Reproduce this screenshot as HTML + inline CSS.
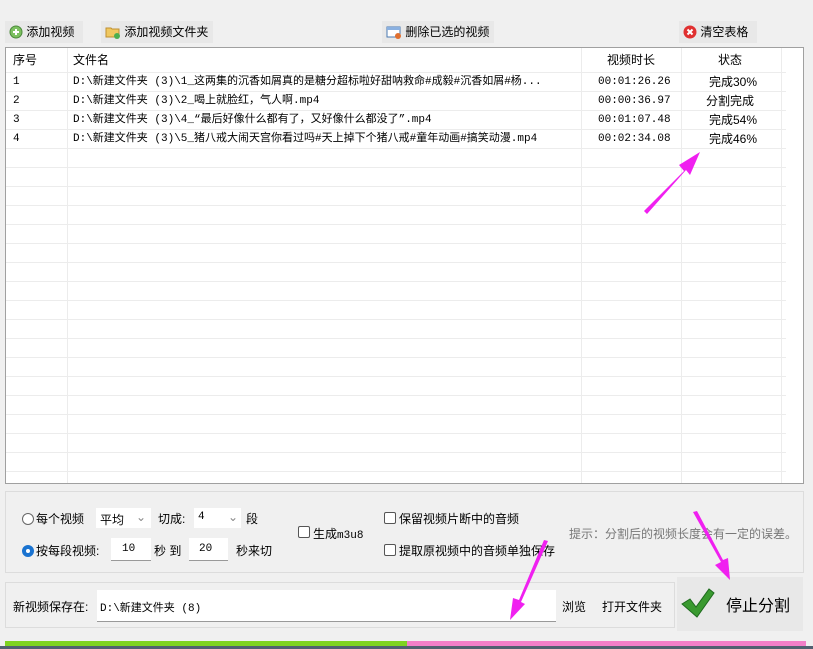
<!DOCTYPE html>
<html><head><meta charset="utf-8"><style>
*{margin:0;padding:0;box-sizing:border-box}
body{width:813px;height:649px;background:#f0f0f0;position:relative;overflow:hidden;font-family:"Liberation Sans","Noto Sans CJK SC",sans-serif;font-size:12px;color:#000}
.a{position:absolute;white-space:nowrap}
.mono{font-family:"Liberation Mono","Noto Sans CJK SC",monospace;font-size:11px}
.r{position:absolute;white-space:nowrap;height:19px;line-height:19px}
.btn{position:absolute;height:22px;background:#e8e8e8;line-height:22px;padding-left:4px}
.grid{position:absolute;left:5px;top:47px;width:799px;height:437px;background:#fff;border:1px solid #a0a0a0;overflow:hidden}
.hl{position:absolute;left:0;width:780px;height:1px;background:#ececec}
.vl{position:absolute;top:0;width:1px;height:437px;background:#ececec}
.box{position:absolute;border:1px solid #dcdcdc}
.inp{position:absolute;background:#fff;border-bottom:1px solid #999}
.cb{position:absolute;width:12px;height:12px;border:1px solid #555;border-radius:2px;background:#fff}
</style></head><body>
<div class="btn" style="left:5px;top:21px;width:78px"><svg width="14" height="14" style="vertical-align:-3px"><circle cx="7" cy="7" r="6" fill="#7cc060" stroke="#4a8a3a"/><path d="M4 7h6M7 4v6" stroke="#fff" stroke-width="2"/></svg> 添加视频</div>
<div class="btn" style="left:101px;top:21px;width:112px"><svg width="16" height="14" style="vertical-align:-3px"><path d="M1 3h5l1 1h7v8H1z" fill="#f0c860" stroke="#c09030"/><circle cx="12" cy="11" r="3" fill="#4caf50"/></svg> 添加视频文件夹</div>
<div class="btn" style="left:382px;top:21px;width:112px"><svg width="16" height="14" style="vertical-align:-3px"><rect x="1" y="2" width="13" height="10" fill="#fff" stroke="#4a78b0"/><rect x="1" y="2" width="13" height="3" fill="#8ab0e0"/><circle cx="12" cy="11" r="3" fill="#e07030"/></svg> 删除已选的视频</div>
<div class="btn" style="left:679px;top:21px;width:78px"><svg width="14" height="14" style="vertical-align:-3px"><circle cx="7" cy="7" r="6.5" fill="#e03030"/><path d="M4.5 4.5l5 5M9.5 4.5l-5 5" stroke="#fff" stroke-width="2"/></svg> 清空表格</div>

<div class="grid">
<div class="hl" style="top:24px"></div>
<div class="hl" style="top:43px"></div><div class="hl" style="top:62px"></div><div class="hl" style="top:81px"></div><div class="hl" style="top:100px"></div><div class="hl" style="top:119px"></div><div class="hl" style="top:138px"></div><div class="hl" style="top:157px"></div><div class="hl" style="top:176px"></div><div class="hl" style="top:195px"></div><div class="hl" style="top:214px"></div><div class="hl" style="top:233px"></div><div class="hl" style="top:252px"></div><div class="hl" style="top:271px"></div><div class="hl" style="top:290px"></div><div class="hl" style="top:309px"></div><div class="hl" style="top:328px"></div><div class="hl" style="top:347px"></div><div class="hl" style="top:366px"></div><div class="hl" style="top:385px"></div><div class="hl" style="top:404px"></div><div class="hl" style="top:423px"></div>
<div class="vl" style="left:61px"></div><div class="vl" style="left:575px"></div><div class="vl" style="left:675px"></div><div class="vl" style="left:775px"></div>
<div class="r" style="left:7px;top:3px">序号</div>
<div class="r" style="left:67px;top:3px">文件名</div>
<div class="r" style="left:601px;top:3px">视频时长</div>
<div class="r" style="left:712px;top:3px">状态</div>
<div class="r mono" style="left:7px;top:25px">1</div>
<div class="r mono" style="left:7px;top:44px">2</div>
<div class="r mono" style="left:7px;top:63px">3</div>
<div class="r mono" style="left:7px;top:82px">4</div>
<div class="r mono" style="left:67px;top:25px">D:\新建文件夹 (3)\1_这两集的沉香如屑真的是糖分超标啦好甜呐救命#成毅#沉香如屑#杨...</div>
<div class="r mono" style="left:67px;top:44px">D:\新建文件夹 (3)\2_喝上就脸红，气人啊.mp4</div>
<div class="r mono" style="left:67px;top:63px">D:\新建文件夹 (3)\4_“最后好像什么都有了，又好像什么都没了”.mp4</div>
<div class="r mono" style="left:67px;top:82px">D:\新建文件夹 (3)\5_猪八戒大闹天宫你看过吗#天上掉下个猪八戒#童年动画#搞笑动漫.mp4</div>
<div class="r mono" style="left:592px;top:25px">00:01:26.26</div>
<div class="r mono" style="left:592px;top:44px">00:00:36.97</div>
<div class="r mono" style="left:592px;top:63px">00:01:07.48</div>
<div class="r mono" style="left:592px;top:82px">00:02:34.08</div>
<div class="r" style="left:703px;top:25px">完成30%</div>
<div class="r" style="left:700px;top:44px">分割完成</div>
<div class="r" style="left:703px;top:63px">完成54%</div>
<div class="r" style="left:703px;top:82px">完成46%</div>
</div>

<div class="box" style="left:5px;top:491px;width:799px;height:82px"></div>
<div class="a" style="left:22px;top:510px"><span style="display:inline-block;width:12px;height:12px;border:1px solid #666;border-radius:50%;background:#fff;vertical-align:-2px;margin-right:2px"></span>每个视频</div>
<div class="inp" style="left:96px;top:508px;width:55px;height:20px;border:none;background:#fff"><span class="a" style="left:4px;top:3px">平均</span><span class="a" style="left:40px;top:2px;color:#888">⌄</span></div>
<div class="a" style="left:158px;top:510px">切成:</div>
<div class="inp" style="left:194px;top:508px;width:47px;height:20px;border:none"><span class="a mono" style="left:4px;top:3px">4</span><span class="a" style="left:34px;top:2px;color:#888">⌄</span></div>
<div class="a" style="left:246px;top:510px">段</div>
<div class="a" style="left:22px;top:542px"><span style="display:inline-block;width:12px;height:12px;border:4px solid #1a73d0;border-radius:50%;background:#fff;vertical-align:-2px;margin-right:2px"></span>按每段视频:</div>
<div class="inp" style="left:111px;top:538px;width:40px;height:23px"><span class="a mono" style="left:11px;top:5px">10</span></div>
<div class="a" style="left:154px;top:542px">秒 到</div>
<div class="inp" style="left:189px;top:538px;width:39px;height:23px"><span class="a mono" style="left:10px;top:5px">20</span></div>
<div class="a" style="left:236px;top:542px">秒来切</div>
<div class="cb" style="left:298px;top:526px"></div><div class="a" style="left:313px;top:525px">生成<span class="mono">m3u8</span></div>
<div class="cb" style="left:384px;top:512px"></div><div class="a" style="left:399px;top:510px">保留视频片断中的音频</div>
<div class="cb" style="left:384px;top:544px"></div><div class="a" style="left:399px;top:542px">提取原视频中的音频单独保存</div>
<div class="a" style="left:569px;top:525px;color:#777">提示：分割后的视频长度会有一定的误差。</div>

<div class="box" style="left:5px;top:582px;width:670px;height:46px"></div>
<div class="a" style="left:13px;top:598px">新视频保存在:</div>
<div class="inp" style="left:97px;top:590px;width:459px;height:32px"><span class="a mono" style="left:3px;top:9px">D:\新建文件夹 (8)</span></div>
<div class="a" style="left:562px;top:598px">浏览</div>
<div class="a" style="left:602px;top:598px">打开文件夹</div>
<div class="a" style="left:677px;top:577px;width:126px;height:54px;background:#e8e8e8"></div>
<svg class="a" style="left:679px;top:586px" width="36" height="34"><path d="M3 18l8-5 6 8L30 3l5 4-17 24z" fill="#3a9a30" stroke="#1e6a1e"/></svg>
<div class="a" style="left:726px;top:592px;font-size:16px">停止分割</div>

<div class="a" style="left:5px;top:641px;width:402px;height:5px;background:#7ed321"></div>
<div class="a" style="left:407px;top:641px;width:399px;height:5px;background:#f27fc8"></div>
<div class="a" style="left:0;top:646px;width:813px;height:3px;background:#506070"></div>

<svg class="a" style="left:0;top:0" width="813" height="649">
<g fill="#f020f0">
<polygon points="644,211 684,171 679,165 700,152 690,175 686,170 647,214"/>
<polygon points="544,540 519,600 513,598 510,620 525,604 521,602 548,541"/>
<polygon points="693,512 721,562 715,565 730,580 728,558 723,560 697,511"/>
</g></svg>
</body></html>
